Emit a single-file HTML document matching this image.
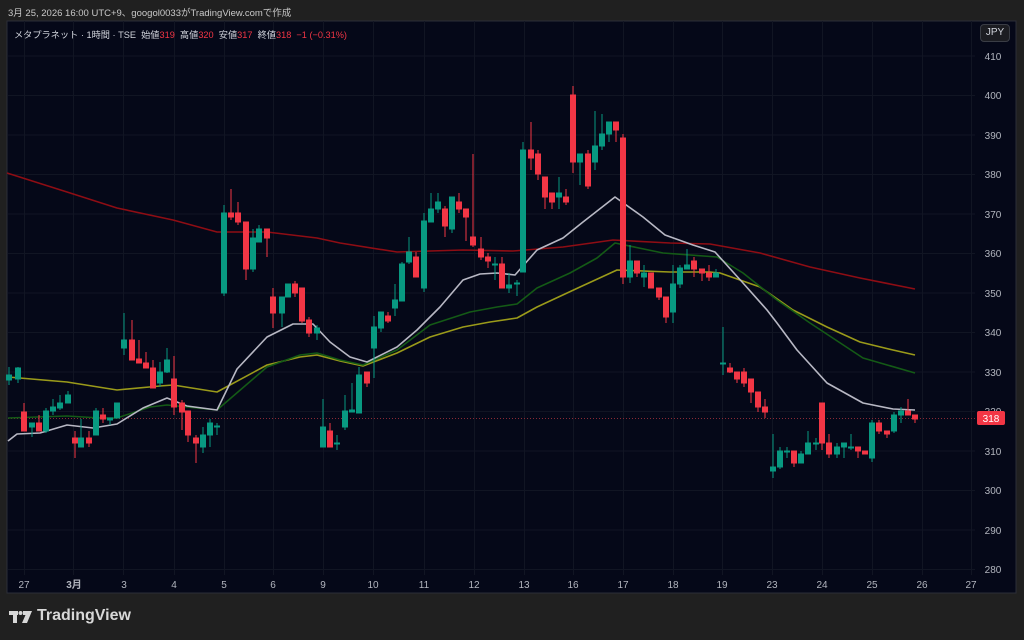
<!DOCTYPE html>
<html><head><meta charset="utf-8"><style>
html,body{margin:0;padding:0;background:#202020;width:1024px;height:640px;overflow:hidden}
body{position:relative;font-family:"Liberation Sans","Noto Sans CJK JP",sans-serif}
.hdr{position:absolute;left:8px;top:5px;font-size:9.5px;color:#c8c8c8;white-space:nowrap}
.legend{position:absolute;left:14px;top:27px;font-size:9.2px;color:#d1d4dc;white-space:nowrap}
.legend .r{color:#f23645}
.jpy{position:absolute;left:980px;top:24px;width:30px;height:18px;background:#1c1d22;border:1px solid #3a3d45;border-radius:4px;color:#d1d4dc;font-size:10px;line-height:16px;text-align:center;box-sizing:border-box}
.tv{position:absolute;left:37px;top:607px;font-size:16px;font-weight:bold;color:#d8d8d8}
</style></head><body>
<div class="hdr">3月 25, 2026 16:00 UTC+9、googol0033がTradingView.comで作成</div>
<svg width="1024" height="640" style="position:absolute;left:0;top:0">
<rect x="7" y="21" width="1009" height="572" fill="#050818" stroke="#2c2e38" stroke-width="1"/>
<g stroke="#111523" stroke-width="1">
<line x1="8" x2="975" y1="56" y2="56"/><line x1="8" x2="975" y1="95.5" y2="95.5"/><line x1="8" x2="975" y1="135" y2="135"/><line x1="8" x2="975" y1="174.5" y2="174.5"/><line x1="8" x2="975" y1="214" y2="214"/><line x1="8" x2="975" y1="253.5" y2="253.5"/><line x1="8" x2="975" y1="293" y2="293"/><line x1="8" x2="975" y1="332.5" y2="332.5"/><line x1="8" x2="975" y1="372" y2="372"/><line x1="8" x2="975" y1="411.5" y2="411.5"/><line x1="8" x2="975" y1="451" y2="451"/><line x1="8" x2="975" y1="490.5" y2="490.5"/><line x1="8" x2="975" y1="530" y2="530"/><line x1="8" x2="975" y1="569.5" y2="569.5"/>
<line y1="21" y2="575" x1="24.5" x2="24.5"/><line y1="21" y2="575" x1="73.5" x2="73.5"/><line y1="21" y2="575" x1="123.5" x2="123.5"/><line y1="21" y2="575" x1="174.5" x2="174.5"/><line y1="21" y2="575" x1="224.5" x2="224.5"/><line y1="21" y2="575" x1="273.5" x2="273.5"/><line y1="21" y2="575" x1="323.5" x2="323.5"/><line y1="21" y2="575" x1="373.5" x2="373.5"/><line y1="21" y2="575" x1="424.5" x2="424.5"/><line y1="21" y2="575" x1="474.5" x2="474.5"/><line y1="21" y2="575" x1="524.5" x2="524.5"/><line y1="21" y2="575" x1="573.5" x2="573.5"/><line y1="21" y2="575" x1="623.5" x2="623.5"/><line y1="21" y2="575" x1="673.5" x2="673.5"/><line y1="21" y2="575" x1="722.5" x2="722.5"/><line y1="21" y2="575" x1="772.5" x2="772.5"/><line y1="21" y2="575" x1="822.5" x2="822.5"/><line y1="21" y2="575" x1="872.5" x2="872.5"/><line y1="21" y2="575" x1="922.5" x2="922.5"/><line y1="21" y2="575" x1="971.5" x2="971.5"/>
</g>
<line x1="8" x2="975" y1="418.5" y2="418.5" stroke="#8a2a35" stroke-width="1" stroke-dasharray="1,2"/>
<g fill="none" stroke-width="1.6" stroke-linejoin="round">
<polyline stroke="#8e0d14" points="7,173 67,192 117,208 173,220 217,232 267,232 317,238 340,243 397,252 463,250 513,251 563,247 613,240 670,243 710,244 760,253 810,267 860,278 915,289"/>
<polyline stroke="#9a9a1a" points="8,377 67,382 117,390 160,386 173,385 217,392 267,365 300,357 317,355 340,361 363,366 397,353 430,337 463,327 490,322 517,318 537,307 580,287 617,270 670,272 710,272 720,273 760,287 793,310 827,327 860,342 893,350 915,355"/>
<polyline stroke="#145a16" points="8,418 67,416 100,418 117,418 150,407 167,405 217,410 267,367 300,355 317,353 340,360 363,365 397,350 430,325 470,312 497,307 517,304 537,288 570,273 597,258 615,243 663,253 717,257 743,273 777,300 810,323 863,358 915,373"/>
<polyline stroke="#b8b8c4" points="8,441 17,434 40,433 67,425 93,428 117,424 143,408 167,398 187,406 217,410 237,369 267,337 293,324 313,324 330,342 350,357 367,362 397,347 417,330 440,307 463,280 480,274 497,273 515,275 537,250 563,238 583,222 615,197 643,217 665,235 693,245 715,252 743,283 767,310 777,323 797,350 827,383 863,403 893,409 915,410"/>
</g>
<g fill="#089981" stroke="#089981" stroke-width="1">
<line x1="9" y1="367" x2="9" y2="385"/><rect x="6.5" y="375" width="5" height="5"/>
<line x1="18" y1="367" x2="18" y2="383"/><rect x="15.5" y="368" width="5" height="11"/>
<line x1="32" y1="423" x2="32" y2="437"/><rect x="29.5" y="423" width="5" height="4"/>
<line x1="46" y1="408" x2="46" y2="433"/><rect x="43.5" y="411" width="5" height="20"/>
<line x1="53" y1="399" x2="53" y2="415"/><rect x="50.5" y="407" width="5" height="4"/>
<line x1="60" y1="395" x2="60" y2="410"/><rect x="57.5" y="403" width="5" height="5"/>
<line x1="68" y1="391" x2="68" y2="403"/><rect x="65.5" y="395" width="5" height="8"/>
<line x1="81" y1="419" x2="81" y2="447"/><rect x="78.5" y="438" width="5" height="9"/>
<line x1="96" y1="408" x2="96" y2="435"/><rect x="93.5" y="411" width="5" height="24"/>
<line x1="110" y1="418" x2="110" y2="425"/><rect x="107.5" y="418" width="5" height="2"/>
<line x1="117" y1="403" x2="117" y2="418"/><rect x="114.5" y="403" width="5" height="15"/>
<line x1="124" y1="313" x2="124" y2="355"/><rect x="121.5" y="340" width="5" height="8"/>
<line x1="160" y1="362" x2="160" y2="387"/><rect x="157.5" y="372" width="5" height="11"/>
<line x1="167" y1="348" x2="167" y2="373"/><rect x="164.5" y="360" width="5" height="12"/>
<line x1="203" y1="427" x2="203" y2="453"/><rect x="200.5" y="435" width="5" height="12"/>
<line x1="210" y1="419" x2="210" y2="447"/><rect x="207.5" y="423" width="5" height="12"/>
<line x1="217" y1="423" x2="217" y2="435"/><rect x="214.5" y="426" width="5" height="1"/>
<line x1="224" y1="205" x2="224" y2="296"/><rect x="221.5" y="213" width="5" height="80"/>
<line x1="253" y1="229" x2="253" y2="272"/><rect x="250.5" y="238" width="5" height="31"/>
<line x1="259" y1="225" x2="259" y2="242"/><rect x="256.5" y="229" width="5" height="13"/>
<line x1="282" y1="297" x2="282" y2="327"/><rect x="279.5" y="297" width="5" height="16"/>
<line x1="288" y1="284" x2="288" y2="297"/><rect x="285.5" y="284" width="5" height="13"/>
<line x1="317" y1="325" x2="317" y2="340"/><rect x="314.5" y="328" width="5" height="5"/>
<line x1="323" y1="399" x2="323" y2="447"/><rect x="320.5" y="427" width="5" height="20"/>
<line x1="337" y1="435" x2="337" y2="450"/><rect x="334.5" y="443" width="5" height="1"/>
<line x1="345" y1="395" x2="345" y2="430"/><rect x="342.5" y="411" width="5" height="16"/>
<line x1="352" y1="383" x2="352" y2="412"/><rect x="349.5" y="410" width="5" height="2"/>
<line x1="359" y1="367" x2="359" y2="413"/><rect x="356.5" y="375" width="5" height="38"/>
<line x1="374" y1="316" x2="374" y2="378"/><rect x="371.5" y="327" width="5" height="21"/>
<line x1="381" y1="312" x2="381" y2="332"/><rect x="378.5" y="312" width="5" height="16"/>
<line x1="395" y1="284" x2="395" y2="316"/><rect x="392.5" y="300" width="5" height="8"/>
<line x1="402" y1="262" x2="402" y2="301"/><rect x="399.5" y="264" width="5" height="37"/>
<line x1="409" y1="237" x2="409" y2="264"/><rect x="406.5" y="252" width="5" height="10"/>
<line x1="424" y1="213" x2="424" y2="292"/><rect x="421.5" y="221" width="5" height="67"/>
<line x1="431" y1="193" x2="431" y2="222"/><rect x="428.5" y="209" width="5" height="13"/>
<line x1="438" y1="193" x2="438" y2="213"/><rect x="435.5" y="202" width="5" height="7"/>
<line x1="452" y1="197" x2="452" y2="233"/><rect x="449.5" y="197" width="5" height="32"/>
<line x1="495" y1="257" x2="495" y2="280"/><rect x="492.5" y="264" width="5" height="1"/>
<line x1="509" y1="273" x2="509" y2="293"/><rect x="506.5" y="285" width="5" height="3"/>
<line x1="517" y1="280" x2="517" y2="296"/><rect x="514.5" y="283" width="5" height="1"/>
<line x1="523" y1="142" x2="523" y2="272"/><rect x="520.5" y="150" width="5" height="122"/>
<line x1="559" y1="177" x2="559" y2="209"/><rect x="556.5" y="193" width="5" height="4"/>
<line x1="580" y1="154" x2="580" y2="185"/><rect x="577.5" y="154" width="5" height="8"/>
<line x1="595" y1="111" x2="595" y2="170"/><rect x="592.5" y="146" width="5" height="16"/>
<line x1="602" y1="114" x2="602" y2="150"/><rect x="599.5" y="134" width="5" height="12"/>
<line x1="609" y1="122" x2="609" y2="142"/><rect x="606.5" y="122" width="5" height="12"/>
<line x1="630" y1="245" x2="630" y2="283"/><rect x="627.5" y="261" width="5" height="16"/>
<line x1="644" y1="265" x2="644" y2="287"/><rect x="641.5" y="273" width="5" height="4"/>
<line x1="673" y1="265" x2="673" y2="323"/><rect x="670.5" y="284" width="5" height="28"/>
<line x1="680" y1="265" x2="680" y2="288"/><rect x="677.5" y="268" width="5" height="16"/>
<line x1="687" y1="249" x2="687" y2="269"/><rect x="684.5" y="265" width="5" height="4"/>
<line x1="716" y1="269" x2="716" y2="277"/><rect x="713.5" y="273" width="5" height="4"/>
<line x1="723" y1="327" x2="723" y2="375"/><rect x="720.5" y="363" width="5" height="1"/>
<line x1="773" y1="434" x2="773" y2="478"/><rect x="770.5" y="467" width="5" height="4"/>
<line x1="780" y1="447" x2="780" y2="469"/><rect x="777.5" y="451" width="5" height="16"/>
<line x1="787" y1="447" x2="787" y2="458"/><rect x="784.5" y="451" width="5" height="1"/>
<line x1="801" y1="451" x2="801" y2="463"/><rect x="798.5" y="454" width="5" height="9"/>
<line x1="808" y1="431" x2="808" y2="454"/><rect x="805.5" y="443" width="5" height="11"/>
<line x1="816" y1="438" x2="816" y2="450"/><rect x="813.5" y="443" width="5" height="1"/>
<line x1="837" y1="443" x2="837" y2="458"/><rect x="834.5" y="447" width="5" height="7"/>
<line x1="844" y1="443" x2="844" y2="458"/><rect x="841.5" y="443" width="5" height="4"/>
<line x1="851" y1="434" x2="851" y2="450"/><rect x="848.5" y="447" width="5" height="1"/>
<line x1="872" y1="420" x2="872" y2="462"/><rect x="869.5" y="423" width="5" height="35"/>
<line x1="894" y1="412" x2="894" y2="433"/><rect x="891.5" y="415" width="5" height="16"/>
<line x1="901" y1="407" x2="901" y2="423"/><rect x="898.5" y="411" width="5" height="4"/>
</g>
<g fill="#f23645" stroke="#f23645" stroke-width="1">
<line x1="24" y1="403" x2="24" y2="431"/><rect x="21.5" y="412" width="5" height="19"/>
<line x1="39" y1="415" x2="39" y2="431"/><rect x="36.5" y="423" width="5" height="8"/>
<line x1="75" y1="431" x2="75" y2="458"/><rect x="72.5" y="438" width="5" height="5"/>
<line x1="89" y1="431" x2="89" y2="447"/><rect x="86.5" y="438" width="5" height="5"/>
<line x1="103" y1="408" x2="103" y2="423"/><rect x="100.5" y="415" width="5" height="4"/>
<line x1="132" y1="320" x2="132" y2="360"/><rect x="129.5" y="340" width="5" height="20"/>
<line x1="139" y1="340" x2="139" y2="363"/><rect x="136.5" y="359" width="5" height="4"/>
<line x1="146" y1="352" x2="146" y2="368"/><rect x="143.5" y="363" width="5" height="5"/>
<line x1="153" y1="360" x2="153" y2="388"/><rect x="150.5" y="368" width="5" height="20"/>
<line x1="174" y1="356" x2="174" y2="415"/><rect x="171.5" y="379" width="5" height="28"/>
<line x1="182" y1="400" x2="182" y2="430"/><rect x="179.5" y="403" width="5" height="9"/>
<line x1="188" y1="411" x2="188" y2="442"/><rect x="185.5" y="411" width="5" height="24"/>
<line x1="196" y1="435" x2="196" y2="463"/><rect x="193.5" y="438" width="5" height="5"/>
<line x1="231" y1="189" x2="231" y2="220"/><rect x="228.5" y="213" width="5" height="4"/>
<line x1="238" y1="202" x2="238" y2="225"/><rect x="235.5" y="213" width="5" height="9"/>
<line x1="246" y1="222" x2="246" y2="280"/><rect x="243.5" y="222" width="5" height="47"/>
<line x1="267" y1="229" x2="267" y2="257"/><rect x="264.5" y="229" width="5" height="9"/>
<line x1="273" y1="288" x2="273" y2="328"/><rect x="270.5" y="297" width="5" height="16"/>
<line x1="295" y1="281" x2="295" y2="297"/><rect x="292.5" y="284" width="5" height="9"/>
<line x1="302" y1="288" x2="302" y2="323"/><rect x="299.5" y="288" width="5" height="33"/>
<line x1="309" y1="317" x2="309" y2="337"/><rect x="306.5" y="320" width="5" height="13"/>
<line x1="330" y1="423" x2="330" y2="447"/><rect x="327.5" y="431" width="5" height="16"/>
<line x1="367" y1="372" x2="367" y2="387"/><rect x="364.5" y="372" width="5" height="11"/>
<line x1="388" y1="312" x2="388" y2="323"/><rect x="385.5" y="316" width="5" height="5"/>
<line x1="416" y1="252" x2="416" y2="277"/><rect x="413.5" y="257" width="5" height="20"/>
<line x1="445" y1="206" x2="445" y2="237"/><rect x="442.5" y="209" width="5" height="17"/>
<line x1="459" y1="193" x2="459" y2="213"/><rect x="456.5" y="202" width="5" height="7"/>
<line x1="466" y1="209" x2="466" y2="241"/><rect x="463.5" y="209" width="5" height="8"/>
<line x1="473" y1="154" x2="473" y2="247"/><rect x="470.5" y="237" width="5" height="8"/>
<line x1="481" y1="237" x2="481" y2="260"/><rect x="478.5" y="249" width="5" height="8"/>
<line x1="488" y1="253" x2="488" y2="268"/><rect x="485.5" y="257" width="5" height="4"/>
<line x1="502" y1="257" x2="502" y2="288"/><rect x="499.5" y="264" width="5" height="24"/>
<line x1="531" y1="122" x2="531" y2="170"/><rect x="528.5" y="150" width="5" height="8"/>
<line x1="538" y1="150" x2="538" y2="180"/><rect x="535.5" y="154" width="5" height="20"/>
<line x1="545" y1="177" x2="545" y2="209"/><rect x="542.5" y="177" width="5" height="20"/>
<line x1="552" y1="193" x2="552" y2="209"/><rect x="549.5" y="193" width="5" height="9"/>
<line x1="566" y1="189" x2="566" y2="205"/><rect x="563.5" y="197" width="5" height="5"/>
<line x1="573" y1="86" x2="573" y2="173"/><rect x="570.5" y="95" width="5" height="67"/>
<line x1="588" y1="150" x2="588" y2="189"/><rect x="585.5" y="154" width="5" height="32"/>
<line x1="616" y1="122" x2="616" y2="142"/><rect x="613.5" y="122" width="5" height="8"/>
<line x1="623" y1="134" x2="623" y2="284"/><rect x="620.5" y="138" width="5" height="139"/>
<line x1="637" y1="261" x2="637" y2="277"/><rect x="634.5" y="261" width="5" height="12"/>
<line x1="651" y1="273" x2="651" y2="288"/><rect x="648.5" y="273" width="5" height="15"/>
<line x1="659" y1="288" x2="659" y2="300"/><rect x="656.5" y="288" width="5" height="9"/>
<line x1="666" y1="297" x2="666" y2="323"/><rect x="663.5" y="297" width="5" height="20"/>
<line x1="694" y1="257" x2="694" y2="277"/><rect x="691.5" y="261" width="5" height="8"/>
<line x1="702" y1="269" x2="702" y2="281"/><rect x="699.5" y="269" width="5" height="4"/>
<line x1="709" y1="265" x2="709" y2="281"/><rect x="706.5" y="273" width="5" height="4"/>
<line x1="730" y1="363" x2="730" y2="373"/><rect x="727.5" y="368" width="5" height="4"/>
<line x1="737" y1="372" x2="737" y2="383"/><rect x="734.5" y="372" width="5" height="7"/>
<line x1="744" y1="368" x2="744" y2="387"/><rect x="741.5" y="372" width="5" height="11"/>
<line x1="751" y1="379" x2="751" y2="403"/><rect x="748.5" y="379" width="5" height="13"/>
<line x1="758" y1="392" x2="758" y2="412"/><rect x="755.5" y="392" width="5" height="15"/>
<line x1="765" y1="399" x2="765" y2="418"/><rect x="762.5" y="407" width="5" height="5"/>
<line x1="794" y1="451" x2="794" y2="467"/><rect x="791.5" y="451" width="5" height="12"/>
<line x1="822" y1="403" x2="822" y2="450"/><rect x="819.5" y="403" width="5" height="40"/>
<line x1="829" y1="434" x2="829" y2="458"/><rect x="826.5" y="443" width="5" height="11"/>
<line x1="858" y1="447" x2="858" y2="458"/><rect x="855.5" y="447" width="5" height="4"/>
<line x1="865" y1="451" x2="865" y2="454"/><rect x="862.5" y="451" width="5" height="3"/>
<line x1="879" y1="420" x2="879" y2="434"/><rect x="876.5" y="423" width="5" height="8"/>
<line x1="887" y1="431" x2="887" y2="438"/><rect x="884.5" y="431" width="5" height="3"/>
<line x1="908" y1="399" x2="908" y2="415"/><rect x="905.5" y="411" width="5" height="4"/>
<line x1="915" y1="415" x2="915" y2="423"/><rect x="912.5" y="415" width="5" height="4"/>
</g>
<g font-family="Liberation Sans, sans-serif" font-size="10" fill="#b2b5be" text-anchor="middle">
<text x="993" y="60">410</text><text x="993" y="99">400</text><text x="993" y="139">390</text><text x="993" y="178">380</text><text x="993" y="218">370</text><text x="993" y="257">360</text><text x="993" y="297">350</text><text x="993" y="336">340</text><text x="993" y="376">330</text><text x="993" y="415">320</text><text x="993" y="455">310</text><text x="993" y="494">300</text><text x="993" y="534">290</text><text x="993" y="573">280</text>
<text x="24" y="588">27</text><text x="74" y="588" font-weight="bold" font-family="Liberation Sans, Noto Sans CJK JP, sans-serif">3月</text><text x="124" y="588">3</text><text x="174" y="588">4</text><text x="224" y="588">5</text><text x="273" y="588">6</text><text x="323" y="588">9</text><text x="373" y="588">10</text><text x="424" y="588">11</text><text x="474" y="588">12</text><text x="524" y="588">13</text><text x="573" y="588">16</text><text x="623" y="588">17</text><text x="673" y="588">18</text><text x="722" y="588">19</text><text x="772" y="588">23</text><text x="822" y="588">24</text><text x="872" y="588">25</text><text x="922" y="588">26</text><text x="971" y="588">27</text>
</g>
<rect x="977" y="411" width="28" height="14" rx="2" fill="#f23645"/>
<text x="991" y="422" font-family="Liberation Sans, sans-serif" font-size="10" fill="#fff" text-anchor="middle">318</text>
<g fill="#d8d8d8">
<rect x="9" y="611" width="9" height="4"/><rect x="13" y="611" width="4" height="12"/>
<circle cx="20.5" cy="613" r="2"/>
<polygon points="23,611 32,611 27,623 22,623 25.5,615 23,615"/>
</g>
</svg>
<div class="legend">メタプラネット · 1時間 · TSE&nbsp;&nbsp;始値<span class="r">319</span>&nbsp;&nbsp;高値<span class="r">320</span>&nbsp;&nbsp;安値<span class="r">317</span>&nbsp;&nbsp;終値<span class="r">318</span>&nbsp;&nbsp;<span class="r">−1 (−0.31%)</span></div>
<div class="jpy">JPY</div>
<div class="tv">TradingView</div>
</body></html>
